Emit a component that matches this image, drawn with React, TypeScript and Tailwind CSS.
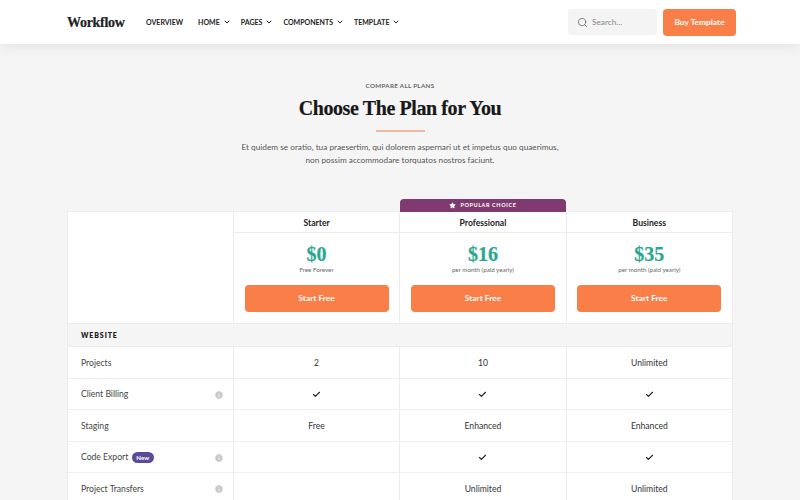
import { ChevronDown, Search, Star, Check, Info } from "lucide-react";

const lato = "font-['Lato',sans-serif]";
const serif = "font-['Liberation_Serif',serif] [-webkit-text-stroke:0.2px]";

const nav = [
  { label: "OVERVIEW", caret: false },
  { label: "HOME", caret: true },
  { label: "PAGES", caret: true },
  { label: "COMPONENTS", caret: true },
  { label: "TEMPLATE", caret: true },
];

const plans = [
  { name: "Starter", price: "$0", note: "Free Forever" },
  { name: "Professional", price: "$16", note: "per month (paid yearly)" },
  { name: "Business", price: "$35", note: "per month (paid yearly)" },
];

const rows = [
  { label: "Projects", info: false, badge: false, values: ["2", "10", "Unlimited"], h: "h-[32px]" },
  { label: "Client Billing", info: true, badge: false, values: ["check", "check", "check"], h: "h-[31px]" },
  { label: "Staging", info: false, badge: false, values: ["Free", "Enhanced", "Enhanced"], h: "h-[32px]" },
  { label: "Code Export", info: true, badge: true, values: ["", "check", "check"], h: "h-[31px]" },
  { label: "Project Transfers", info: true, badge: false, values: ["", "Unlimited", "Unlimited"], h: "h-[32px]" },
];

function Header() {
  return (
    <header className="h-[44px] bg-white shadow-[0_2px_14px_rgba(0,0,0,0.09)] flex items-center pl-[67px] relative">
      <div className={`${serif} text-[14px] font-bold text-[#222] w-[79px] tracking-[-0.3px]`}>Workflow</div>
      <nav className="flex items-center gap-[15px] text-[7px] font-bold text-[#222]">
        {nav.map((item) => (
          <div key={item.label} className="flex items-center gap-[3px]">
            {item.label}
            {item.caret && <ChevronDown size={8} strokeWidth={3} className="-mr-[5px]" />}
          </div>
        ))}
      </nav>
      <div className="ml-auto mr-[6px] w-[89px] h-[26px] bg-[#f4f4f4] rounded-[4px] flex items-center pl-[9px] gap-[4px] text-[8.25px] text-[#888]">
        <Search size={11} strokeWidth={1.75} className="text-[#666]" />
        Search...
      </div>
      <button className="mr-[64px] w-[73px] h-[27px] bg-[#f97e48] rounded-[4px] text-white text-[8.4px] font-bold">
        Buy Template
      </button>
    </header>
  );
}

function Hero() {
  return (
    <section className="flex flex-col items-center pt-[37px]">
      <div className="text-[6.25px] font-bold tracking-[0.3px] text-[#666] leading-[9px]">COMPARE ALL PLANS</div>
      <h1 className={`${serif} text-[20px] font-bold text-[#181818] leading-[26px] mt-[5px] tracking-[-0.4px]`}>
        Choose The Plan for You
      </h1>
      <div className="w-[49px] h-[2px] bg-[#edb89b] mt-[9px]" />
      <p className="text-[8.25px] leading-[13px] text-[#555] text-center mt-[9px]">
        Et quidem se oratio, tua praesertim, qui dolorem aspernari ut et impetus quo quaerimus,
        <br />
        non possim accommodare torquatos nostros faciunt.
      </p>
    </section>
  );
}

function PlanColumn({ plan, popular }: { plan: (typeof plans)[number]; popular: boolean }) {
  return (
    <div className="w-[166.5px] relative border-l border-[#ececec]">
      {popular && (
        <div className="absolute left-0 right-0 top-[-13px] h-[13px] bg-[#813a6f] rounded-t-[4px] flex items-center justify-center gap-[4px] text-white text-[5.5px] font-bold tracking-[0.6px]">
          <Star size={7} fill="white" strokeWidth={1} />
          POPULAR CHOICE
        </div>
      )}
      <div className="h-[21px] pt-[2px] flex items-center justify-center border-b border-[#ececec] text-[8.6px] font-bold text-[#222]">
        {plan.name}
      </div>
      <div className="flex flex-col items-center pt-[8px]">
        <div className={`${serif} text-[20px] font-bold leading-[26px] text-[#2aa88f]`}>{plan.price}</div>
        <div className="text-[6.2px] text-[#666] leading-[9px] -mt-[2px]">{plan.note}</div>
        <button className="mt-[11px] w-[144px] h-[27px] bg-[#f97e48] rounded-[4px] text-white text-[8.4px] font-bold">
          Start Free
        </button>
      </div>
    </div>
  );
}

function Cell({ value }: { value: string }) {
  return (
    <div className="w-[166.5px] pt-[1px] flex items-center justify-center border-l border-[#ececec] text-[8.6px] text-[#333]">
      {value === "check" ? <Check size={9} strokeWidth={3} className="text-[#222]" /> : value}
    </div>
  );
}

function PlanTable() {
  return (
    <section className="mx-[67px] mt-[44px] w-[666px] bg-white border-t border-x border-[#ececec]">
      <div className="flex h-[111px]">
        <div className="w-[165px]" />
        {plans.map((plan) => (
          <PlanColumn key={plan.name} plan={plan} popular={plan.name === "Professional"} />
        ))}
      </div>
      <div className="h-[24px] bg-[#f5f5f5] flex items-center pl-[13px] border-y border-[#ececec] text-[7px] font-extrabold tracking-[0.9px] text-[#222]">
        WEBSITE
      </div>
      {rows.map((row) => (
        <div key={row.label} className={`flex ${row.h} border-b border-[#efefef]`}>
          <div className="w-[165px] pt-[1px] flex items-center pl-[13px] pr-[9px] text-[8.6px] text-[#444]">
            {row.label}
            {row.badge && (
              <span className="ml-[3.5px] px-[4.5px] h-[11px] leading-[11px] rounded-full bg-[#5b4a98] text-white text-[6.2px] font-bold">
                New
              </span>
            )}
            {row.info && <Info size={10} className="ml-auto text-white fill-[#c8c8c8]" />}
          </div>
          {row.values.map((value, i) => (
            <Cell key={i} value={value} />
          ))}
        </div>
      ))}
    </section>
  );
}

export default function App() {
  return (
    <div className={`${lato} w-[800px] h-[500px] overflow-hidden bg-[#f5f5f5]`}>
      <Header />
      <Hero />
      <PlanTable />
    </div>
  );
}
